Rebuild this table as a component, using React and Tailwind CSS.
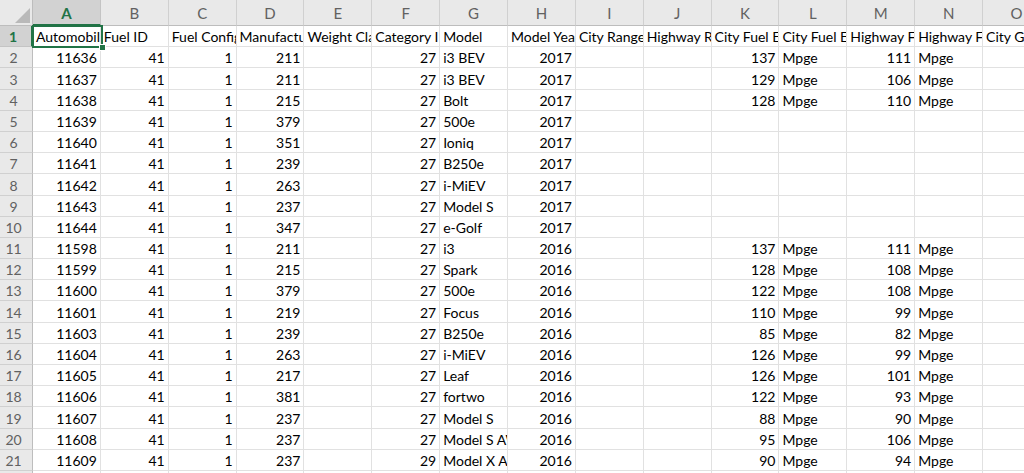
const COLS = ["A", "B", "C", "D", "E", "F", "G", "H", "I", "J", "K", "L", "M", "N", "O"]

const HEADERS = [
    "Automobile ID", "Fuel ID", "Fuel Configuration ID", "Manufacturer ID", "Weight Class ID",
    "Category ID", "Model", "Model Year", "City Range", "Highway Range",
    "City Fuel Economy", "City Fuel Economy Unit", "Highway Fuel Economy", "Highway Fuel Economy Unit", "City Gasoline Consumption",
]

// id, manufacturer, category, model, year, city fuel, highway fuel
const ROWS = [
    [11636, 211, 27, "i3 BEV", 2017, 137, 111],
    [11637, 211, 27, "i3 BEV", 2017, 129, 106],
    [11638, 215, 27, "Bolt", 2017, 128, 110],
    [11639, 379, 27, "500e", 2017],
    [11640, 351, 27, "Ioniq", 2017],
    [11641, 239, 27, "B250e", 2017],
    [11642, 263, 27, "i-MiEV", 2017],
    [11643, 237, 27, "Model S", 2017],
    [11644, 347, 27, "e-Golf", 2017],
    [11598, 211, 27, "i3", 2016, 137, 111],
    [11599, 215, 27, "Spark", 2016, 128, 108],
    [11600, 379, 27, "500e", 2016, 122, 108],
    [11601, 219, 27, "Focus", 2016, 110, 99],
    [11603, 239, 27, "B250e", 2016, 85, 82],
    [11604, 263, 27, "i-MiEV", 2016, 126, 99],
    [11605, 217, 27, "Leaf", 2016, 126, 101],
    [11606, 381, 27, "fortwo", 2016, 122, 93],
    [11607, 237, 27, "Model S", 2016, 88, 90],
    [11608, 237, 27, "Model S AWD", 2016, 95, 106],
    [11609, 237, 29, "Model X AWD", 2016, 90, 94],
]

const toCells = (r) => {
    const [id, man, cat, model, year, city, hwy] = r
    return [
        id, 41, 1, man, "", cat, model, year, "", "",
        city ?? "", city ? "Mpge" : "", hwy ?? "", hwy ? "Mpge" : "", "",
    ]
}

const Cell = ({ value }) => {
    const isNum = typeof value === "number"
    return (
        <div className={`h-full w-[67.86px] shrink-0 border-r border-b border-[#e1e1e1] overflow-hidden whitespace-nowrap px-[3px] leading-[18px] flex items-end ${isNum ? "justify-end" : "justify-start"}`}>
            <span>{value}</span>
        </div>
    )
}

const RowHead = ({ n, active }) => (
    <div className={`h-full w-[33px] shrink-0 border-b flex items-end justify-center pr-[5px] leading-[18px] ${active ? "bg-[#d2d2d2] text-[#217346] font-bold border-r-2 border-r-[#217346] border-b-[#c4c4c4]" : "bg-[#e9e9e9] text-[#616161] border-r border-r-[#bdbdbd] border-b-[#d0d0d0]"}`}>
        {n}
    </div>
)

export default function App() {
    return (
        <div className="relative w-[1024px] h-[473px] overflow-hidden bg-white text-[14px] text-black" style={{ fontFamily: "Lato, 'Open Sans', sans-serif" }}>
            <div className="flex h-[26px]">
                <div className="relative w-[33px] shrink-0 bg-[#e9e9e9] border-r border-b border-[#bdbdbd]">
                    <svg className="absolute right-[2px] bottom-[2px]" width="15" height="15" viewBox="0 0 15 15">
                        <polygon points="15,0 15,15 0,15" fill="#b9b9b9" />
                    </svg>
                </div>
                {COLS.map((c, i) => (
                    <div
                        key={c}
                        className={`w-[67.86px] shrink-0 flex items-center justify-center pt-[2px] text-[15px] ${i === 0 ? "bg-[#d2d2d2] text-[#217346] font-bold border-b-2 border-b-[#217346] border-r border-r-[#c4c4c4]" : "bg-[#e9e9e9] text-[#616161] border-b border-b-[#bdbdbd] border-r border-r-[#d0d0d0]"}`}
                    >
                        {c}
                    </div>
                ))}
            </div>

            <div className="flex h-[21.2px]">
                <RowHead n={1} active />
                {HEADERS.map((h, i) => (
                    <Cell key={i} value={h} />
                ))}
            </div>

            {ROWS.map((r, i) => (
                <div key={i} className="flex h-[21.2px]">
                    <RowHead n={i + 2} />
                    {toCells(r).map((v, j) => (
                        <Cell key={j} value={v} />
                    ))}
                </div>
            ))}

            <div className="flex h-[21.2px]">
                <RowHead n={22} />
                {COLS.map((c) => (
                    <Cell key={c} value="" />
                ))}
            </div>

            {/* active cell A1 */}
            <div className="absolute left-[32px] top-[25px] w-[71px] h-[23px] border-2 border-[#217346] pointer-events-none" />
            <div className="absolute left-[99px] top-[44px] w-[7px] h-[7px] bg-[#217346] border border-white" />
        </div>
    )
}
